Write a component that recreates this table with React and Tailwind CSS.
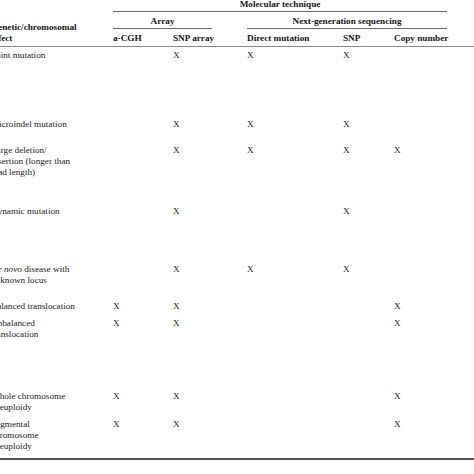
const rows = [
  { label: ["Point mutation"], h: "h-[69px]", marks: [false, true, true, true, false] },
  { label: ["Microindel mutation"], h: "h-[26px]", marks: [false, true, true, true, false] },
  { label: ["Large deletion/", "insertion (longer than", "read length)"], h: "h-[61px]", marks: [false, true, true, true, true] },
  { label: ["Dynamic mutation"], h: "h-[58px]", marks: [false, true, false, true, false] },
  { label: [<><i>De novo</i> disease with</>, "unknown locus"], h: "h-[37px]", marks: [false, true, true, true, false] },
  { label: ["Balanced translocation"], h: "h-[17px]", marks: [true, true, false, false, true] },
  { label: ["Unbalanced", "translocation"], h: "h-[73px]", marks: [true, true, false, false, true] },
  { label: ["Whole chromosome", "aneuploidy"], h: "h-[28px]", marks: [true, true, false, false, true] },
  { label: ["Segmental", "chromosome", "aneuploidy"], h: "h-[42px]", marks: [true, true, false, false, true] },
];

const cols = "grid grid-cols-[122px_60px_74px_96px_51px_53px_27px]";

export default function App() {
  return (
    <div
      className="w-[474px] h-[474px] overflow-hidden bg-white text-[#1c1c1c] text-[9.2px] leading-[11px]"
      style={{ fontFamily: '"Liberation Serif", "Times New Roman", serif' }}
    >
      <div className="ml-[-9px] w-[483px]">
        {/* Header */}
        <div className={`${cols} border-b border-[#8a8a8a] font-bold text-[#151515]`}>
          <div className="col-start-2 col-span-5 row-start-1 -mt-[1px] pb-[1px] text-center border-b-[1.5px] border-[#6a6a6a]">
            Molecular technique
          </div>
          <div className="col-start-1 row-start-2 row-span-2 self-end pb-[2px] whitespace-nowrap">
            Genetic/chromosomal
            <br />
            effect
          </div>
          <div className="col-start-2 col-span-2 row-start-2 pt-[4px]">
            <div className="w-[99px] pb-[1px] text-center border-b-[1.5px] border-[#6a6a6a]">Array</div>
          </div>
          <div className="col-start-4 col-span-3 row-start-2 pt-[4px] pb-[1px] text-center border-b-[1.5px] border-[#6a6a6a]">
            Next-generation sequencing
          </div>
          <div className="col-start-2 row-start-3 pt-[3.5px] pb-[2px]">a-CGH</div>
          <div className="col-start-3 row-start-3 pt-[3.5px] pb-[2px]">SNP array</div>
          <div className="col-start-4 row-start-3 pt-[3.5px] pb-[2px]">Direct mutation</div>
          <div className="col-start-5 row-start-3 pt-[3.5px] pb-[2px]">SNP</div>
          <div className="col-start-6 row-start-3 pt-[3.5px] pb-[2px] whitespace-nowrap">Copy number</div>
        </div>

        {/* Body */}
        <div className="border-b-[2.5px] border-[#555555]">
          {rows.map((r, i) => (
            <div key={i} className={`${cols} ${r.h} pt-[3px]`}>
              <div className="whitespace-nowrap">
                {r.label.map((l, j) => (
                  <div key={j}>{l}</div>
                ))}
              </div>
              {r.marks.map((m, j) => (
                <div key={j}>{m ? "X" : ""}</div>
              ))}
              <div />
            </div>
          ))}
        </div>
      </div>
    </div>
  );
}
